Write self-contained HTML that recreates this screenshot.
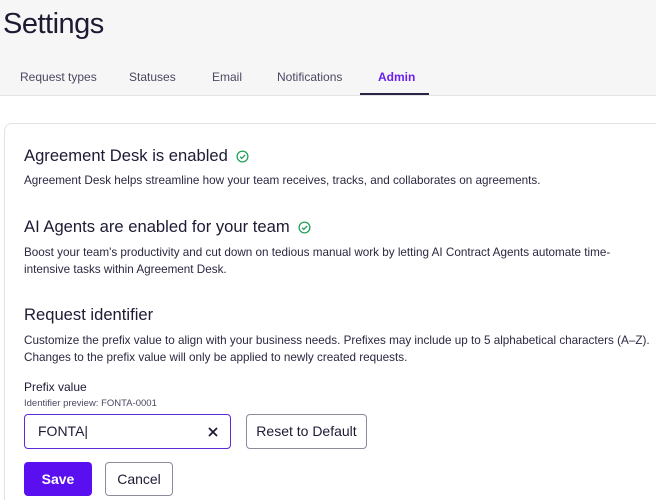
<!DOCTYPE html>
<html><head><style>
html,body{margin:0;width:656px;height:500px;overflow:hidden}
body{background:#fff;font-family:"Liberation Sans",sans-serif;color:#1e1a34;position:relative}
.top{position:absolute;left:0;top:0;width:656px;height:95px;background:#f6f6f6;border-bottom:1px solid #e4e4e6}
h1{position:absolute;left:3px;top:8px;margin:0;font-weight:400;font-size:29px;letter-spacing:-0.5px}
.tab{position:absolute;top:70px;font-size:12px;color:#4b4860}
.ul{position:absolute;left:360px;top:93px;width:69px;height:2px;background:#2b2545}
.card{position:absolute;left:4px;top:123px;width:651px;height:376px;border:1px solid #e2e2e4;border-bottom:none;border-right:none;border-radius:8px 0 0 0}
.h{position:absolute;left:24px;font-size:16.6px;margin:0}
.p{position:absolute;left:24px;font-size:11.7px;line-height:17px;color:#2b2840;width:605px}
.ck{display:inline-block;vertical-align:middle;margin-left:8px}
.btn{position:absolute;border:1px solid #8e8a9c;border-radius:4px;font-size:14px;text-align:center;box-sizing:border-box}
</style></head><body>
<div class="top"></div>
<h1>Settings</h1>
<div class="tab" style="left:20px">Request types</div>
<div class="tab" style="left:129px">Statuses</div>
<div class="tab" style="left:212px">Email</div>
<div class="tab" style="left:277px">Notifications</div>
<div class="tab" style="left:378px;color:#6a1ff0;font-weight:bold">Admin</div>
<div class="ul"></div>
<div class="card"></div>
<div class="h" style="top:146px">Agreement Desk is enabled<svg class="ck" width="13" height="13" viewBox="0 0 14 14"><circle cx="7" cy="7" r="5.8" fill="none" stroke="#22a05a" stroke-width="1.4"/><path d="M4.3 7.2l1.9 1.9 3.6-3.7" fill="none" stroke="#22a05a" stroke-width="1.4"/></svg></div>
<div class="p" style="top:172px">Agreement Desk helps streamline how your team receives, tracks, and collaborates on agreements.</div>
<div class="h" style="top:217px">AI Agents are enabled for your team<svg class="ck" width="13" height="13" viewBox="0 0 14 14"><circle cx="7" cy="7" r="5.8" fill="none" stroke="#22a05a" stroke-width="1.4"/><path d="M4.3 7.2l1.9 1.9 3.6-3.7" fill="none" stroke="#22a05a" stroke-width="1.4"/></svg></div>
<div class="p" style="top:244px">Boost your team's productivity and cut down on tedious manual work by letting AI Contract Agents automate time-<br>intensive tasks within Agreement Desk.</div>
<div class="h" style="top:305px">Request identifier</div>
<div class="p" style="top:332px;width:640px">Customize the prefix value to align with your business needs. Prefixes may include up to 5 alphabetical characters (A–Z).<br>Changes to the prefix value will only be applied to newly created requests.</div>
<div style="position:absolute;left:24px;top:380px;font-size:12px">Prefix value</div>
<div style="position:absolute;left:24px;top:398px;font-size:9.5px;color:#4b4860">Identifier preview: FONTA-0001</div>
<div style="position:absolute;left:24px;top:414px;width:207px;height:35px;box-sizing:border-box;border:1.5px solid #5a2ad8;border-radius:4px">
<span style="position:absolute;left:13px;top:8px;font-size:14px">FONTA|</span>
<svg style="position:absolute;left:182px;top:11px" width="12" height="12" viewBox="0 0 12 12"><path d="M2 2L10 10M10 2L2 10" stroke="#1e1a34" stroke-width="1.8"/></svg></div>
<div class="btn" style="left:246px;top:414px;width:121px;height:35px;line-height:33px">Reset to Default</div>
<div class="btn" style="left:24px;top:462px;width:68px;height:34px;line-height:34px;background:#5a0ff0;border:none;color:#fff;font-weight:bold">Save</div>
<div class="btn" style="left:105px;top:462px;width:68px;height:34px;line-height:32px">Cancel</div>
</body></html>
